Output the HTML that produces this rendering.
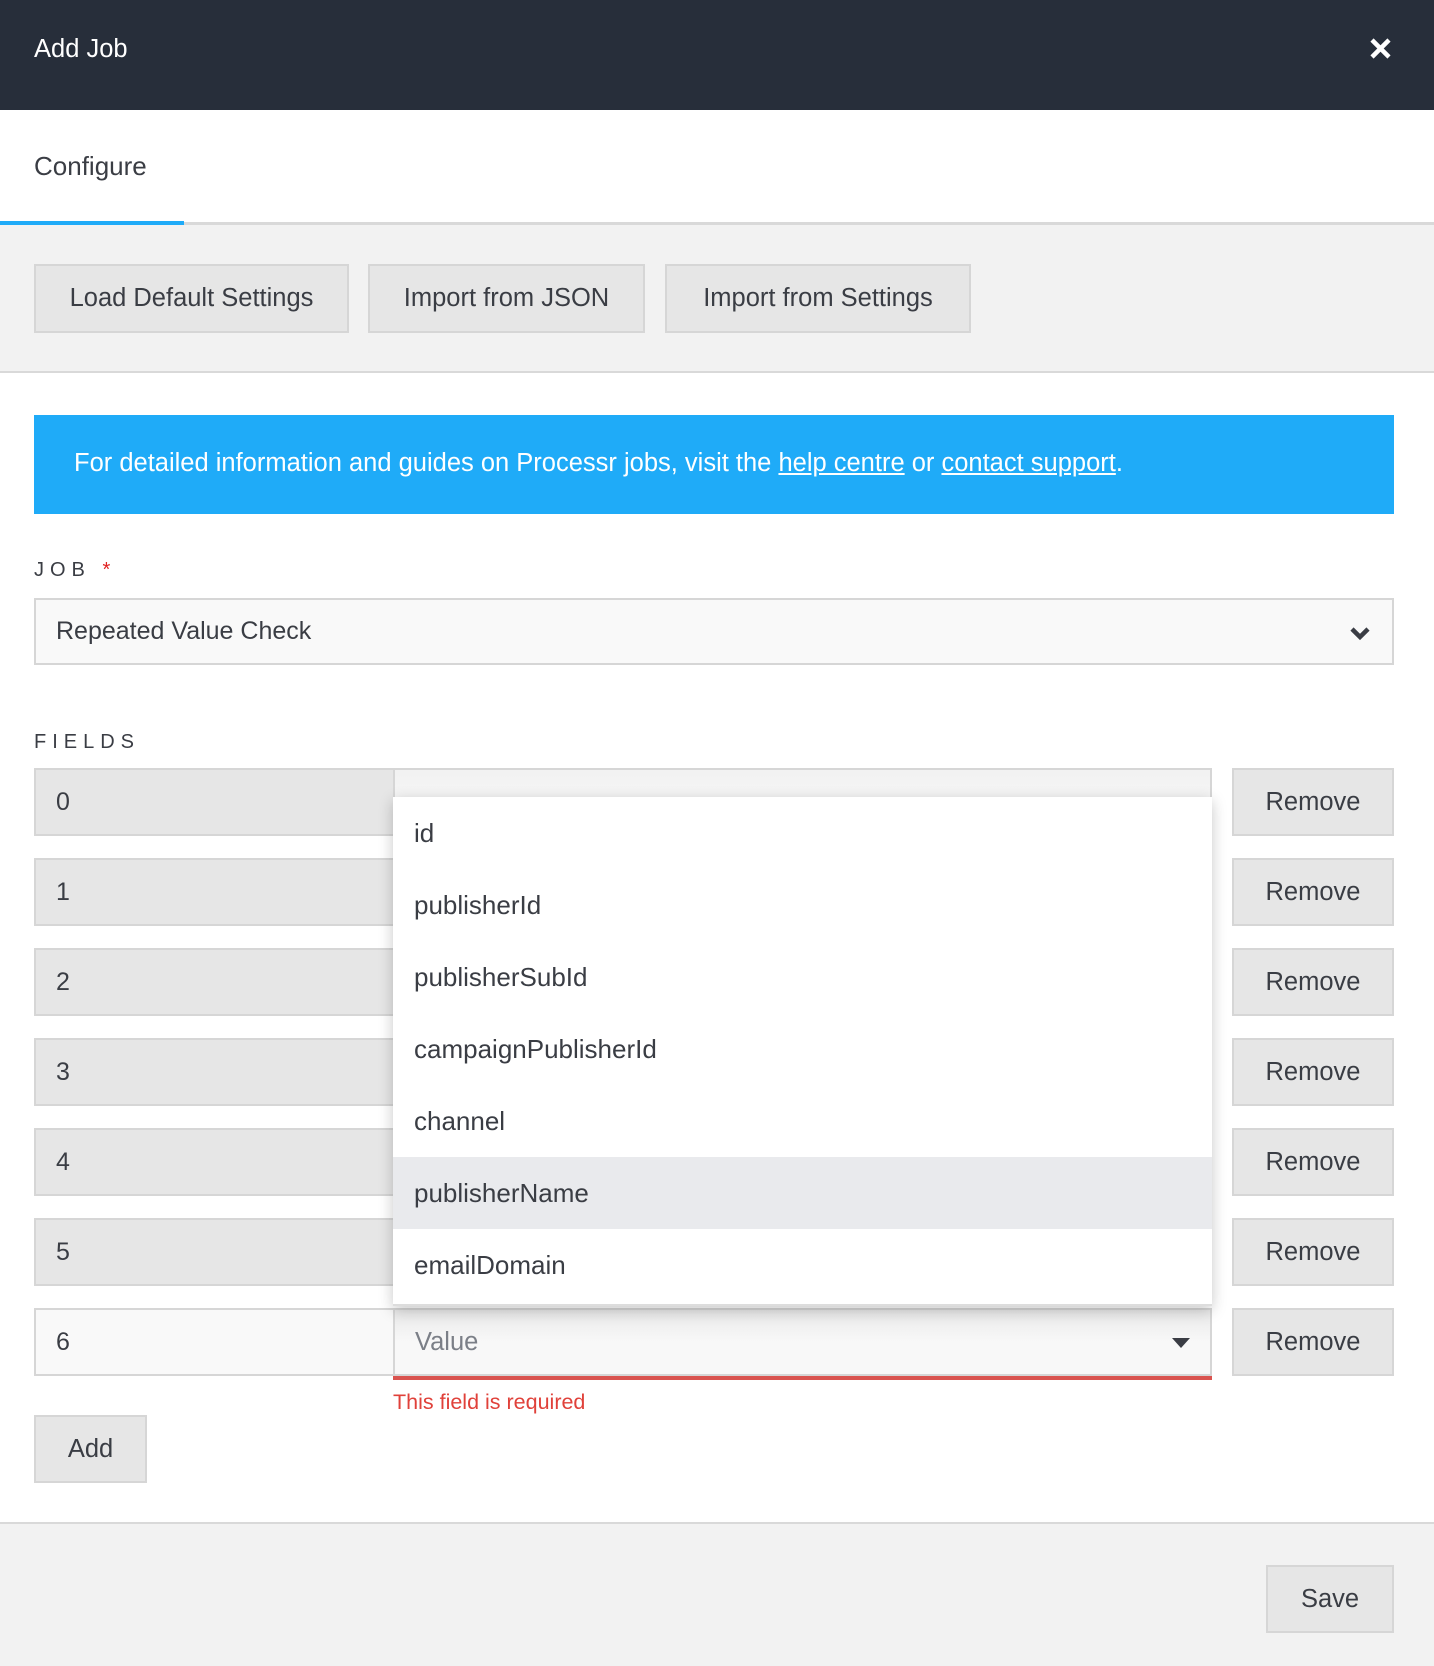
<!DOCTYPE html>
<html><head><meta charset="utf-8">
<style>
*{box-sizing:border-box;margin:0;padding:0}
body{width:1434px;height:1666px;position:relative;background:#fff;font-family:"Liberation Sans",Arial,sans-serif;color:#3a3d44;overflow:hidden}
.a{position:absolute}
.hdr{left:0;top:0;width:1434px;height:110px;background:#272e3a}
.btn{position:absolute;background:#e6e6e6;border:2px solid #d6d6d6;display:flex;align-items:center;justify-content:center;font-size:25.5px;color:#3a3d44}
.lbl{font-size:20px;letter-spacing:6px;color:#3a3d44}
.fld{position:absolute;left:34px;width:360px;height:68px;background:#e6e6e6;border:2px solid #d6d6d6;border-right:none;font-size:25px;padding-left:20px;display:flex;align-items:center}
.sel{position:absolute;left:393px;width:819px;height:68px;background:linear-gradient(#f2f2f2,#f8f8f8);border:2px solid #d6d6d6;font-size:25.5px;padding-left:20px;display:flex;align-items:center}
.item{height:72px;display:flex;align-items:center;padding-left:21px;font-size:26px;color:#3a3d44}
</style></head><body>
<div class="a hdr"></div>
<div class="a" style="left:34px;top:35px;font-size:25.5px;color:#fff">Add Job</div>
<svg class="a" style="left:1368px;top:36px" width="25" height="25" viewBox="0 0 25 25"><path d="M4 4L21 21M21 4L4 21" stroke="#fff" stroke-width="4.5"/></svg>

<div class="a" style="left:34px;top:151px;font-size:26px;color:#3a3d44">Configure</div>
<div class="a" style="left:0;top:222px;width:1434px;height:3px;background:#d9d9d9"></div>
<div class="a" style="left:0;top:221px;width:184px;height:4px;background:#1fabf8"></div>

<div class="a" style="left:0;top:225px;width:1434px;height:148px;background:#f2f2f2;border-bottom:2px solid #d9d9d9"></div>
<div class="btn" style="left:34px;top:264px;width:315px;height:69px">Load Default Settings</div>
<div class="btn" style="left:368px;top:264px;width:277px;height:69px">Import from JSON</div>
<div class="btn" style="left:665px;top:264px;width:306px;height:69px">Import from Settings</div>

<div class="a" style="left:34px;top:415px;width:1360px;height:99px;background:#1fabf8"></div>
<div class="a" style="left:74px;top:449px;font-size:25.5px;color:#fff;white-space:nowrap">For detailed information and guides on Processr jobs, visit the <u>help centre</u> or <u>contact support</u>.</div>

<div class="a lbl" style="left:34px;top:559px">JOB <span style="color:#e02020">*</span></div>
<div class="a" style="left:34px;top:598px;width:1360px;height:67px;background:#f9f9f9;border:2px solid #d6d6d6"></div>
<div class="a" style="left:56px;top:617px;font-size:25px">Repeated Value Check</div>
<svg class="a" style="left:1350px;top:626px" width="20" height="16" viewBox="0 0 20 16"><path d="M2 3L10 11L18 3" stroke="#3a3d44" stroke-width="4.5" fill="none"/></svg>

<div class="a lbl" style="left:34px;top:731px">FIELDS</div>

<div class="fld" style="top:768px">0</div>
<div class="fld" style="top:858px">1</div>
<div class="fld" style="top:948px">2</div>
<div class="fld" style="top:1038px">3</div>
<div class="fld" style="top:1128px">4</div>
<div class="fld" style="top:1218px">5</div>
<div class="fld" style="top:1308px;background:#f9f9f9">6</div>

<div class="sel" style="top:768px;align-items:flex-start;padding-top:24px;overflow:hidden">firstName</div>
<div class="sel" style="top:1308px;color:#7b7f87;background:linear-gradient(#e9e9e9,#f8f8f8 50%)">Value</div>
<svg class="a" style="left:1172px;top:1338px" width="18" height="10" viewBox="0 0 18 10"><path d="M0 0H18L9 10Z" fill="#3a3d44"/></svg>
<div class="a" style="left:393px;top:1376px;width:819px;height:4px;background:#d9534f"></div>
<div class="a" style="left:393px;top:1390px;font-size:21.5px;color:#e0413a">This field is required</div>

<div class="btn" style="left:1232px;top:768px;width:162px;height:68px">Remove</div>
<div class="btn" style="left:1232px;top:858px;width:162px;height:68px">Remove</div>
<div class="btn" style="left:1232px;top:948px;width:162px;height:68px">Remove</div>
<div class="btn" style="left:1232px;top:1038px;width:162px;height:68px">Remove</div>
<div class="btn" style="left:1232px;top:1128px;width:162px;height:68px">Remove</div>
<div class="btn" style="left:1232px;top:1218px;width:162px;height:68px">Remove</div>
<div class="btn" style="left:1232px;top:1308px;width:162px;height:68px">Remove</div>

<div class="a" style="left:393px;top:797px;width:819px;height:509px;background:#fff;box-shadow:0 4px 14px rgba(0,0,0,.22);border-bottom:2px solid #ddd">
<div class="item">id</div>
<div class="item">publisherId</div>
<div class="item">publisherSubId</div>
<div class="item">campaignPublisherId</div>
<div class="item">channel</div>
<div class="item" style="background:#e9eaed">publisherName</div>
<div class="item">emailDomain</div>
</div>

<div class="btn" style="left:34px;top:1415px;width:113px;height:68px">Add</div>

<div class="a" style="left:0;top:1522px;width:1434px;height:144px;background:#f2f2f2;border-top:2px solid #d9d9d9"></div>
<div class="btn" style="left:1266px;top:1565px;width:128px;height:68px">Save</div>
</body></html>
